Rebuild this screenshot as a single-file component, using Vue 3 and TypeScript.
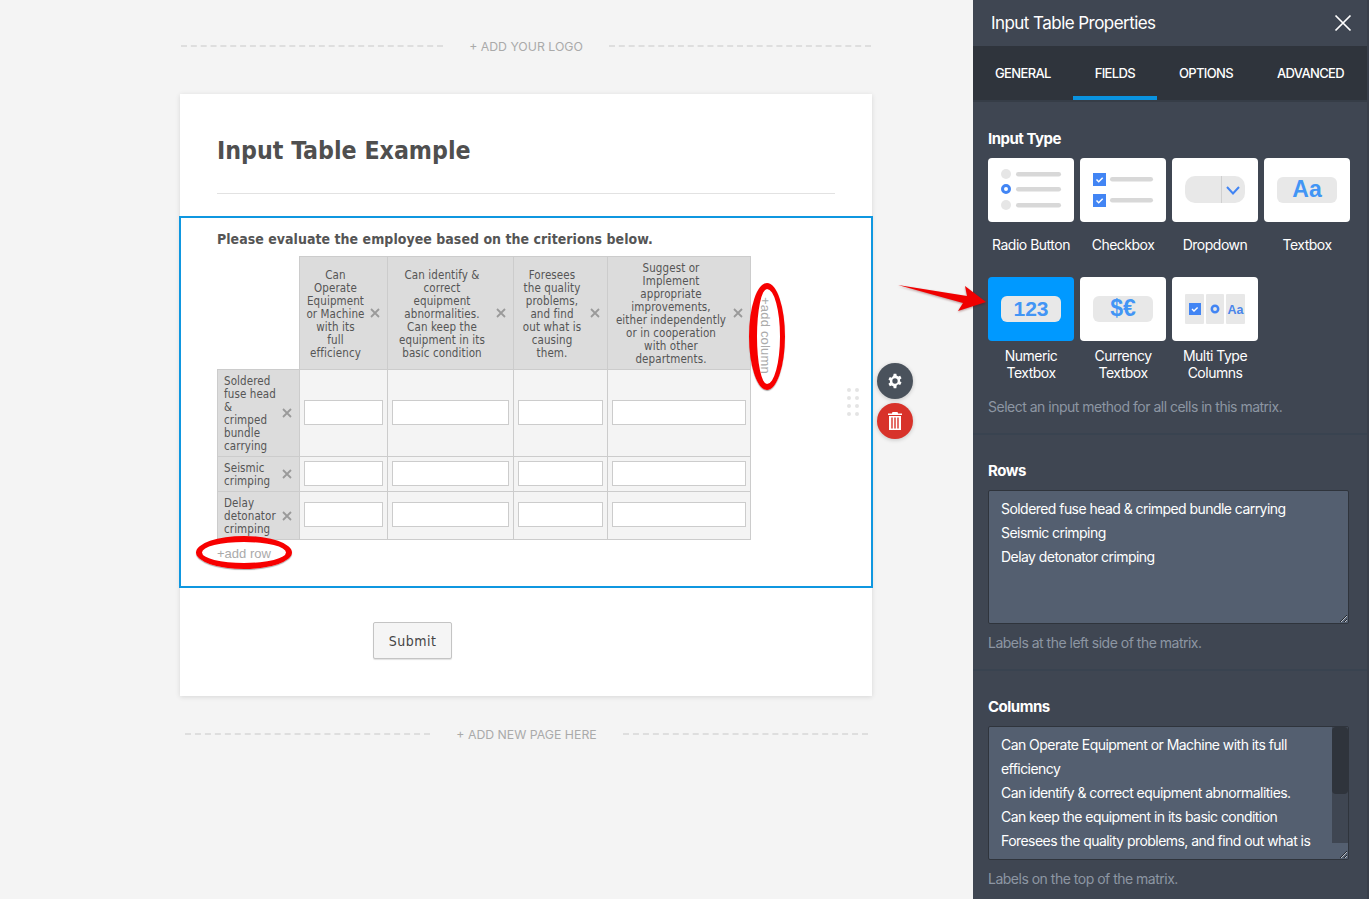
<script setup lang="ts">
const columns = [
  { text: 'Can Operate Equipment or Machine with its\nfull efficiency', width: 88, pad: 5, box: 61 },
  { text: 'Can identify & correct equipment abnormalities. Can keep the equipment in its basic condition', width: 126, pad: 7, box: 94 },
  { text: 'Foresees the quality problems, and find out what is causing them.', width: 94, pad: 8, box: 60 },
  { text: 'Suggest or Implement appropriate improvements, either independently or in cooperation with other departments.', width: 143, pad: 7, box: 112 },
]
const rows = ['Soldered fuse head & crimped bundle carrying', 'Seismic crimping', 'Delay detonator crimping']
const tabs = ['GENERAL', 'FIELDS', 'OPTIONS', 'ADVANCED']
const tiles = [
  { id: 'radio', label: 'Radio Button' },
  { id: 'check', label: 'Checkbox' },
  { id: 'drop', label: 'Dropdown' },
  { id: 'text', label: 'Textbox' },
  { id: 'num', label: 'Numeric Textbox' },
  { id: 'cur', label: 'Currency Textbox' },
  { id: 'multi', label: 'Multi Type Columns' },
]
const rowsText = rows.join('\n')
const colsText =
  'Can Operate Equipment or Machine with its full efficiency\nCan identify & correct equipment abnormalities.\nCan keep the equipment in its basic condition\nForesees the quality problems, and find out what is causing them.\nSuggest or Implement appropriate improvements, either independently or in cooperation with other departments.'
</script>

<template>
  <div class="page">
    <main class="canvas">
      <div class="sheet">
        <div class="slot logo-slot">
          <span class="dash"></span><span class="slot-text">+ ADD YOUR LOGO</span><span class="dash"></span>
        </div>
        <section class="card">
          <header class="card-head">
            <h1>Input Table Example</h1>
          </header>
          <div class="frame">
            <p class="question">Please evaluate the employee based on the criterions below.</p>
            <div class="matrix-wrap">
              <table class="matrix">
                <colgroup>
                  <col class="col-head" />
                  <col v-for="c in columns" :key="c.width" :style="{ width: c.width + 'px' }" />
                </colgroup>
                <thead>
                  <tr>
                    <th class="corner"></th>
                    <th v-for="c in columns" :key="c.text" class="colh">
                      <div class="colh-in" :style="{ paddingLeft: c.pad + 'px' }">
                        <span class="colh-text" :style="{ width: c.box + 'px' }">{{ c.text }}</span>
                        <svg class="x" viewBox="0 0 10 10" width="10" height="10">
                          <path d="M1 1l8 8M9 1l-8 8" />
                        </svg>
                      </div>
                    </th>
                  </tr>
                </thead>
                <tbody>
                  <tr v-for="(r, ri) in rows" :key="r" :class="'row' + ri">
                    <th class="rowh">
                      <div class="rowh-in">
                        <span class="rowh-text">{{ r }}</span>
                        <svg class="x" viewBox="0 0 10 10" width="10" height="10">
                          <path d="M1 1l8 8M9 1l-8 8" />
                        </svg>
                      </div>
                    </th>
                    <td v-for="c in columns" :key="c.text"><input type="text" /></td>
                  </tr>
                </tbody>
              </table>
              <div class="add-col"><span>+add column</span><i class="oval oval-col"></i></div>
            </div>
            <div class="add-row"><span>+add row</span><i class="oval oval-row"></i></div>
            <div class="drag">
              <i v-for="n in 8" :key="n"></i>
            </div>
            <div class="fab fab-gear">
              <svg viewBox="0 0 24 24" width="16" height="16" fill="#fff">
                <path fill-rule="evenodd" d="M10 1h4l.6 3a8.500 8.500 0 0 1 2.300 1.300l2.900-1 2 3.500-2.300 2a8.500 8.500 0 0 1 0 2.600l2.300 2-2 3.500-2.900-1a8.500 8.500 0 0 1-2.300 1.300L14 23h-4l-.6-3a8.500 8.500 0 0 1-2.300-1.300l-2.900 1-2-3.500 2.300-2a8.500 8.500 0 0 1 0-2.600l-2.300-2 2-3.500 2.900 1A8.500 8.500 0 0 1 9.400 4zM12 8a4 4 0 1 0 0 8 4 4 0 0 0 0-8z" />
              </svg>
            </div>
            <div class="fab fab-trash">
              <svg viewBox="0 0 14 18" width="14" height="18" fill="#fff">
                <path fill-rule="evenodd" d="M4.500 0h5l.6 1.400H14V3H0V1.400h3.900zM1 4h12v14H1zM3.300 5.500v11h1.400v-11zM6.300 5.500v11h1.400v-11zM9.300 5.500v11h1.400v-11z" />
              </svg>
            </div>
          </div>
          <div class="submit-row"><button class="submit" type="button">Submit</button></div>
        </section>
        <div class="slot page-slot">
          <span class="dash"></span><span class="slot-text">+ ADD NEW PAGE HERE</span><span class="dash"></span>
        </div>
      </div>
    </main>

    <aside class="panel">
      <div class="panel-head">
        <span>Input Table Properties</span>
        <svg class="close" viewBox="0 0 18 18" width="18" height="18" fill="none" stroke="#fff" stroke-width="1.700">
          <path d="M1.500 1.500l15 15M16.500 1.500l-15 15" />
        </svg>
      </div>
      <nav class="tabs">
        <a v-for="t in tabs" :key="t" class="tab" :class="{ on: t === 'FIELDS' }">{{ t }}</a>
      </nav>

      <section class="sec sec-type">
        <h2>Input Type</h2>
        <div class="tiles">
          <div v-for="t in tiles" :key="t.id" class="tile-wrap">
            <div class="tile" :class="{ sel: t.id === 'num' }">
              <svg viewBox="0 0 86 64" width="86" height="64">
                <g v-if="t.id === 'radio'">
                  <circle cx="18" cy="16" r="5" fill="#e6e6e6" />
                  <circle cx="18" cy="31" r="3.500" fill="#fff" stroke="#4285f4" stroke-width="3" />
                  <circle cx="18" cy="47" r="5" fill="#e6e6e6" />
                  <rect x="28" y="14" width="45" height="4.500" rx="2.200" fill="#d8d8d8" />
                  <rect x="28" y="29" width="45" height="4.500" rx="2.200" fill="#d8d8d8" />
                  <rect x="28" y="45" width="45" height="4.500" rx="2.200" fill="#d8d8d8" />
                </g>
                <g v-else-if="t.id === 'check'">
                  <rect x="13" y="15" width="13" height="13" fill="#4285f4" />
                  <path d="M16.500 21.500l2.200 2.200 4-4" fill="none" stroke="#fff" stroke-width="1.500" />
                  <rect x="13" y="36" width="13" height="13" fill="#4285f4" />
                  <path d="M16.500 42.500l2.200 2.200 4-4" fill="none" stroke="#fff" stroke-width="1.500" />
                  <rect x="30" y="19" width="43" height="4.500" rx="2.200" fill="#d8d8d8" />
                  <rect x="30" y="40" width="43" height="4.500" rx="2.200" fill="#d8d8d8" />
                </g>
                <g v-else-if="t.id === 'drop'">
                  <rect x="13" y="18" width="60" height="27" rx="10" fill="#e8e8e8" />
                  <rect x="49" y="18" width="1" height="27" fill="#d0d0d0" />
                  <path d="M55 29l6 6.500 6-6.500" fill="none" stroke="#4285f4" stroke-width="2" />
                </g>
                <g v-else-if="t.id === 'multi'">
                  <rect x="13" y="17" width="19" height="30" rx="1" fill="#e8e8e8" />
                  <rect x="34" y="17" width="18" height="30" rx="1" fill="#e8e8e8" />
                  <rect x="54" y="17" width="19" height="30" rx="1" fill="#e8e8e8" />
                  <rect x="17" y="26" width="12" height="12" fill="#4285f4" />
                  <path d="M20 32l2 2 3.600-3.600" fill="none" stroke="#fff" stroke-width="1.400" />
                  <circle cx="43" cy="32" r="3.200" fill="#e8e8e8" stroke="#4285f4" stroke-width="2.500" />
                  <text x="63.500" y="36.500" text-anchor="middle" class="tile-aa-sm">Aa</text>
                </g>
                <g v-else>
                  <rect x="13" y="19" width="60" height="26" rx="6" fill="#e8e8e8" />
                  <text x="43" y="39" text-anchor="middle" class="tile-txt" :class="{ big: t.id !== 'num' }">{{
                    t.id === 'text' ? 'Aa' : t.id === 'num' ? '123' : '$€'
                  }}</text>
                </g>
              </svg>
            </div>
            <div class="tile-label">{{ t.label }}</div>
          </div>
        </div>
        <p class="help help-type">Select an input method for all cells in this matrix.</p>
      </section>

      <section class="sec sec-rows">
        <h2>Rows</h2>
        <textarea class="ta" readonly :value="rowsText"></textarea>
        <p class="help">Labels at the left side of the matrix.</p>
      </section>

      <section class="sec sec-cols">
        <h2>Columns</h2>
        <div class="ta-wrap">
          <textarea class="ta ta-scroll" readonly :value="colsText"></textarea>
          <div class="sb"><div class="sb-thumb"></div></div>
        </div>
        <p class="help">Labels on the top of the matrix.</p>
      </section>
    </aside>

    <svg class="arrow" viewBox="0 0 92 30" width="92" height="30">
      <path d="M1 1L70 12 68 2 89 18 61 27 66 19z" fill="#f00000" />
    </svg>
  </div>
</template>

<style>
html,
body {
  margin: 0;
  overflow: hidden;
}
</style>

<style scoped>
.page {
  position: relative;
  display: flex;
  height: 899px;
  overflow: hidden;
  background: #f4f4f4;
}
.canvas {
  width: 973px;
  flex: none;
  font-family: 'DejaVu Sans', sans-serif;
  font-stretch: condensed;
}
.sheet {
  width: 692px;
  margin-left: 180px;
}
.slot {
  display: flex;
  align-items: center;
  color: #aaaaaa;
  font: 12.300px/16px Inter, sans-serif;
  white-space: nowrap;
}
.logo-slot {
  padding: 38px 1px 0;
  height: 16px;
}
.page-slot {
  margin-top: 30px;
  padding: 0 4px 0 5px;
  height: 16px;
}
.slot-text {
  margin: 0 26px;
  padding-top: 1px;
}
.dash {
  flex: 1;
  border-top: 2px dashed #dedede;
}
.card {
  margin-top: 40px;
  height: 602px;
  background: #fff;
  box-shadow: 0 1px 5px rgba(0, 0, 0, 0.12);
  display: flow-root;
}
.card-head {
  margin: 0 37px;
  height: 99px;
  border-bottom: 1px solid #e2e2e2;
  box-sizing: content-box;
}
.card-head h1 {
  margin: 0;
  padding-top: 40px;
  font-size: 24.700px;
  line-height: 34px;
  font-weight: 700;
  color: #4f4f4f;
}
.frame {
  position: relative;
  margin: 22px -1px 0;
  height: 372px;
  box-sizing: border-box;
  border: 2px solid #0f97e0;
  padding-left: 36px;
}
.question {
  margin: 0;
  padding-top: 12px;
  height: 38px;
  box-sizing: border-box;
  font-size: 14px;
  letter-spacing: 0.035px;
  line-height: 18px;
  font-weight: 700;
  color: #555;
}
.matrix-wrap {
  display: flex;
  align-items: flex-start;
}
.matrix {
  border-collapse: collapse;
  table-layout: fixed;
  width: 533px;
  font-size: 11.500px;
  letter-spacing: 0.1px;
  line-height: 13px;
  color: #555;
}
.col-head {
  width: 82px;
}
.matrix th {
  font-weight: 400;
  padding: 0;
  border: 1px solid #cccccc;
  background: #dcdcdc;
}
.matrix th.corner {
  border: 0;
  background: transparent;
}
.matrix td {
  border: 1px solid #cccccc;
  background: #f4f4f4;
  padding: 0 4px 2px;
}
.matrix input {
  display: block;
  width: 100%;
  height: 25px;
  box-sizing: border-box;
  border: 1px solid #cccccc;
  background: #fff;
  padding: 0;
  margin: 0;
}
.colh {
  height: 112px;
}
.colh-in {
  display: flex;
  align-items: center;
  padding-top: 2px;
  padding-right: 7px;
}
.colh-text {
  flex: none;
  text-align: center;
  white-space: pre-line;
}
.rowh-in {
  display: flex;
  align-items: center;
  padding: 2px 7px 0 6px;
}
.rowh-text {
  width: 53px;
  flex: none;
  text-align: left;
}
.x {
  flex: none;
  margin-left: auto;
  margin-top: -2px;
  fill: none;
  stroke: #9a9a9a;
  stroke-width: 1.800;
}
.row0 {
  height: 87px;
}
.row1 {
  height: 35px;
}
.row2 {
  height: 48px;
}
.add-col {
  position: relative;
  width: 34px;
  height: 134px;
  font: 13px/16px 'Liberation Sans', sans-serif;
  letter-spacing: 0.2px;
  color: #aaa;
  display: flex;
  align-items: center;
  justify-content: center;
}
.add-col span {
  writing-mode: vertical-rl;
  margin-top: 26px;
  margin-right: 6px;
}
.oval {
  position: absolute;
  box-sizing: border-box;
  border: 6px solid #f70000;
  border-radius: 50%;
  box-shadow: 0 1px 1px rgba(0, 0, 0, 0.35);
}
.oval-col {
  left: -2px;
  top: 27px;
  width: 36px;
  height: 107px;
  border-width: 6px 5px 6px 8px;
}
.add-row {
  position: relative;
  margin-top: 6px;
  font: 13px/16px 'Liberation Sans', sans-serif;
  color: #aaa;
}
.oval-row {
  left: -21px;
  top: -10px;
  width: 96px;
  height: 33px;
}
.drag {
  position: absolute;
  left: 666px;
  top: 170px;
  display: grid;
  grid-template-columns: 4px 4px;
  gap: 4px;
  column-gap: 4px;
}
.drag i {
  width: 4px;
  height: 4px;
  border-radius: 50%;
  background: #e4e4e4;
}
.fab {
  position: absolute;
  left: 696px;
  width: 36px;
  height: 36px;
  border-radius: 50%;
  display: flex;
  align-items: center;
  justify-content: center;
  box-shadow: 0 1px 4px rgba(0, 0, 0, 0.2);
}
.fab-gear {
  top: 145px;
  background: #4a525c;
}
.fab-trash {
  top: 185px;
  background: #d8322a;
}
.submit-row {
  padding: 34px 0 0 193px;
}
.submit {
  width: 79px;
  height: 37px;
  border: 1px solid #c4c4c4;
  border-radius: 2px;
  background: #f5f5f5;
  box-shadow: 0 1px 1px rgba(0, 0, 0, 0.12);
  color: #444;
  font: 14px 'DejaVu Sans', sans-serif;
  font-stretch: condensed;
  letter-spacing: 0.5px;
  padding: 0;
}
.panel {
  flex: 1;
  min-width: 0;
  background: #3f4652;
  border-right: 2px solid #393f4a;
  color: #fff;
  font-family: Inter, sans-serif;
  letter-spacing: -0.5px;
}
.panel-head {
  height: 46px;
  padding: 0 15px 0 18px;
  display: flex;
  align-items: center;
  justify-content: space-between;
  font-size: 17px;
  letter-spacing: -0.55px;
}
.tabs {
  display: flex;
  height: 54px;
  background: #2f343c;
  border-bottom: 2px solid #363d47;
}
.tab {
  padding: 0 22px;
  line-height: 54px;
  font-size: 13px;
  font-weight: 500;
  position: relative;
  letter-spacing: -0.65px;
}
.tab.on::after {
  content: '';
  position: absolute;
  left: 0;
  right: 0;
  bottom: 0;
  height: 4px;
  background: #0a93e0;
}
.sec {
  padding: 0 15px;
  border-bottom: 2px solid #394350;
}
.sec h2 {
  margin: 0;
  font-size: 15px;
  line-height: 20px;
  font-weight: 700;
  letter-spacing: -0.5px;
}
.sec-type {
  padding-top: 27px;
  height: 333px;
  box-sizing: border-box;
}
.tiles {
  display: grid;
  grid-template-columns: repeat(4, 86px);
  column-gap: 6px;
  row-gap: 0;
  margin-top: 9px;
}
.tile-wrap:nth-child(-n + 4) {
  height: 119px;
}
.tile-wrap:nth-child(-n + 4) .tile-label {
  margin-top: 13px;
}
.tile {
  width: 86px;
  height: 64px;
  background: #fff;
  border-radius: 4px;
}
.tile svg {
  display: block;
}
.tile.sel {
  background: #0099ff;
}
.tile-txt {
  font: 700 21px 'Liberation Sans', sans-serif;
  fill: #4295f5;
  letter-spacing: 0;
}
.tile-txt.big {
  font-size: 23px;
}
.tile-aa-sm {
  font: 700 12.500px 'Liberation Sans', sans-serif;
  fill: #4a86ea;
  letter-spacing: 0;
}
.tile-label {
  margin-top: 5px;
  text-align: center;
  font-size: 14px;
  line-height: 17px;
  padding-top: 1px;
}
.help {
  margin: 0;
  color: #8d96a3;
  font-size: 14px;
  line-height: 18px;
}
.help-type {
  margin-top: 17px;
}
.sec-rows {
  padding-top: 26px;
  height: 236px;
  box-sizing: border-box;
}
.sec-cols {
  padding-top: 26px;
  border-bottom: 0;
}
.sec-rows h2,
.sec-cols h2 {
  height: 20px;
}
.ta-wrap {
  position: relative;
}
.ta {
  display: block;
  width: 361px;
  height: 134px;
  margin-top: 9px;
  margin-bottom: 10px;
  box-sizing: border-box;
  background: #545f70;
  border: 1px solid #2f343c;
  border-radius: 2px;
  color: #fff;
  padding: 6px 12px;
  font: 14px/24px Inter, sans-serif;
  letter-spacing: -0.55px;
  outline: none;
}
.ta-scroll {
  padding-right: 28px;
  overflow: hidden;
}
.sb {
  position: absolute;
  left: 344px;
  top: 1px;
  width: 16px;
  height: 116px;
  background: #3f4652;
}
.sb-thumb {
  height: 67px;
  background: #2f343c;
  border-radius: 4px;
}
.arrow {
  position: absolute;
  left: 897px;
  top: 284px;
  filter: drop-shadow(0 1px 1px rgba(90, 0, 0, 0.4));
}
</style>
